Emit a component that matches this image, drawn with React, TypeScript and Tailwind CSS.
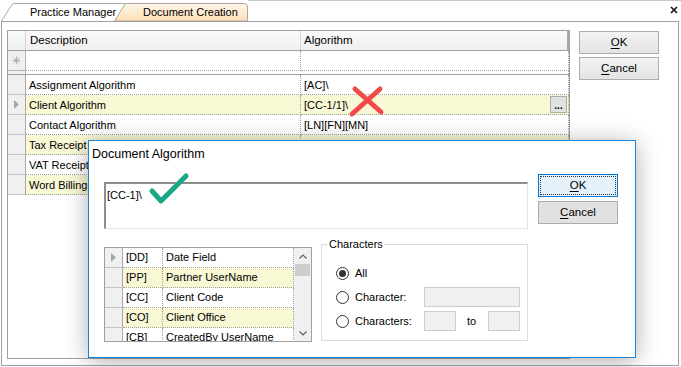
import type { ReactNode } from 'react'

type MainRow = {
  description: string
  algorithm: string
  alt?: boolean
  current?: boolean
  browse?: boolean
}

const mainRows: MainRow[] = [
  { description: 'Assignment Algorithm', algorithm: '[AC]\\' },
  { description: 'Client Algorithm', algorithm: '[CC-1/1]\\', alt: true, current: true, browse: true },
  { description: 'Contact Algorithm', algorithm: '[LN][FN][MN]' },
  { description: 'Tax Receipt Algorithm', algorithm: '', alt: true },
  { description: 'VAT Receipt Algorithm', algorithm: '' },
  { description: 'Word Billing Algorithm', algorithm: '', alt: true },
]

const fields = [
  { code: '[DD]', name: 'Date Field', current: true },
  { code: '[PP]', name: 'Partner UserName', alt: true },
  { code: '[CC]', name: 'Client Code' },
  { code: '[CO]', name: 'Client Office', alt: true },
  { code: '[CB]', name: 'CreatedBy UserName' },
]

function RowPointer() {
  return (
    <svg width="5" height="9" viewBox="0 0 5 9">
      <path d="M0 0 L5 4.5 L0 9 Z" fill="#a6a6a6" />
    </svg>
  )
}

function NewRowGlyph() {
  return (
    <svg width="9" height="9" viewBox="0 0 9 9" stroke="#b0b0b0" strokeWidth="1">
      <path d="M4.5 0.5 V8.5 M0.5 4.5 H8.5 M1.7 1.7 L7.3 7.3 M7.3 1.7 L1.7 7.3" />
    </svg>
  )
}

function Mnemonic({ first, rest }: { first: string; rest: string }) {
  return (
    <span>
      <span className="underline underline-offset-[2px]">{first}</span>
      {rest}
    </span>
  )
}

function WinButton({ children }: { children: ReactNode }) {
  return (
    <div className="flex h-[23px] w-[80px] items-center justify-center border border-[#adadad] bg-gradient-to-b from-[#f3f3f3] to-[#e4e4e4] text-[11.5px]">
      {children}
    </div>
  )
}

function TabStrip() {
  return (
    <div className="relative h-[21px] text-[11px]">
      <svg className="absolute inset-0" width="681" height="21" viewBox="0 0 681 21">
        <defs>
          <linearGradient id="tabSel" x1="0" y1="0" x2="0" y2="1">
            <stop offset="0" stopColor="#fff6ea" />
            <stop offset="1" stopColor="#fcdfb4" />
          </linearGradient>
        </defs>
        <line x1="248" y1="0.5" x2="681" y2="0.5" stroke="#c8c8c8" />
        <path d="M1.5 21 L12 4.5 Q13 3.5 15 3.5 L126 3.5" fill="white" stroke="#a8a8a8" />
        <path
          d="M114.5 21 L124.5 4.8 Q125.5 3.5 127.5 3.5 L244 3.5 Q247.5 3.5 247.5 7 L247.5 21 Z"
          fill="url(#tabSel)"
          stroke="#a8a8a8"
        />
        <path d="M671 7 L677 13 M677 7 L671 13" stroke="#111" strokeWidth="1.6" />
      </svg>
      <div className="relative flex h-full items-center pl-[30px] pt-[3px]">
        <span className="w-[113px]">Practice Manager</span>
        <span>Document Creation</span>
      </div>
    </div>
  )
}

function MainGrid() {
  return (
    <div className="flex h-[329px] w-[563px] flex-col border border-[#a0a0a0] bg-white text-[11px]">
      <div className="flex h-[20px] border-b border-[#a0a0a0] bg-gradient-to-b from-[#fafafa] to-[#f0f0f0] text-[11.5px]">
        <div className="w-[18px] border-r border-[#d0d0d0]" />
        <div className="flex w-[275px] items-center border-r border-[#d6d6d6] pl-[4px]">Description</div>
        <div className="flex flex-1 items-center border-r-2 border-[#a8a8a8] pl-[3px]">Algorithm</div>
      </div>
      <div className="flex h-[20px]">
        <div className="flex w-[18px] items-center justify-center border-b border-r border-[#b4b4b4] bg-[#f0f0f0]">
          <NewRowGlyph />
        </div>
        <div className="w-[275px] border-b border-r border-dotted border-[#a0a0a0]" />
        <div className="flex-1 border-b border-r border-dotted border-[#a0a0a0]" />
      </div>
      <div className="flex h-[4px] border-b border-[#a0a0a0]">
        <div className="w-[18px] border-r border-[#b4b4b4] bg-[#f0f0f0]" />
        <div className="flex-1 border-r border-dotted border-[#a0a0a0]" />
      </div>
      {mainRows.map((row) => (
        <div key={row.description} className="flex h-[20px]">
          <div className="flex w-[18px] items-center justify-center border-b border-r border-b-[#c4c4c4] border-r-[#a8a8a8] bg-[#f0f0f0]">
            {row.current && <RowPointer />}
          </div>
          <div
            className={`flex w-[275px] items-center whitespace-nowrap border-b border-r border-dotted border-[#a0a0a0] pl-[3px] pt-px ${row.alt ? 'bg-[#f8f8d5]' : ''}`}
          >
            {row.description}
          </div>
          <div
            className={`flex flex-1 items-center justify-between border-b border-r border-dotted border-[#a0a0a0] pl-[3px] pr-[1px] ${row.alt ? 'bg-[#f8f8d5]' : ''}`}
          >
            <span className="pt-px">{row.algorithm}</span>
            {row.browse && (
              <span className="flex h-[17px] w-[17px] items-end justify-center border border-[#adadad] bg-[#e1e1e1] pb-[2px] text-[10px] font-bold leading-[8px]">
                ...
              </span>
            )}
          </div>
        </div>
      ))}
    </div>
  )
}

function Radio({ checked }: { checked?: boolean }) {
  return (
    <span className="flex h-[13px] w-[13px] shrink-0 items-center justify-center rounded-full border border-[#333333] bg-white">
      {checked && <span className="h-[7px] w-[7px] rounded-full bg-[#333333]" />}
    </span>
  )
}

function FieldGrid() {
  return (
    <div className="mt-[10px] flex h-[95px] w-[208px] overflow-hidden border border-[#a0a0a0] bg-white text-[11px]">
      <div className="flex w-[189px] flex-col">
        {fields.map((f) => (
          <div key={f.code} className="flex h-[20px] shrink-0">
            <div className="flex w-[18px] items-center justify-center border-b border-r border-b-[#c4c4c4] border-r-[#a8a8a8] bg-[#f0f0f0]">
              {f.current && <RowPointer />}
            </div>
            <div
              className={`flex w-[40px] items-center border-b border-r border-dotted border-[#a0a0a0] pl-[3px] ${f.alt ? 'bg-[#f8f8d5]' : ''}`}
            >
              {f.code}
            </div>
            <div
              className={`flex w-[131px] items-center whitespace-nowrap border-b border-r border-dotted border-[#a0a0a0] pl-[3px] ${f.alt ? 'bg-[#f8f8d5]' : ''}`}
            >
              {f.name}
            </div>
          </div>
        ))}
      </div>
      <div className="flex w-[17px] flex-col bg-[#f0f0f0]">
        <div className="flex h-[16px] items-center justify-center">
          <svg width="8" height="5" viewBox="0 0 8 5">
            <path d="M0.5 4.5 L4 1 L7.5 4.5" fill="none" stroke="#606060" strokeWidth="1.2" />
          </svg>
        </div>
        <div className="mx-[1px] h-[12px] bg-[#cdcdcd]" />
        <div className="flex-1" />
        <div className="flex h-[16px] items-center justify-center">
          <svg width="8" height="5" viewBox="0 0 8 5">
            <path d="M0.5 0.5 L4 4 L7.5 0.5" fill="none" stroke="#606060" strokeWidth="1.2" />
          </svg>
        </div>
      </div>
    </div>
  )
}

function CharactersGroup() {
  return (
    <fieldset className="ml-[9px] h-[104px] w-[207px] min-w-0 border border-[#dcdcdc] text-[11px]">
      <legend className="ml-[6px] px-[1px] leading-[14px]">Characters</legend>
      <div className="flex flex-col pl-[14px] pt-[10px]">
        <div className="flex h-[24px] items-center gap-[6px]">
          <Radio checked />
          <span>All</span>
        </div>
        <div className="flex h-[24px] items-center gap-[6px]">
          <Radio />
          <span className="w-[63px]">Character:</span>
          <span className="h-[20px] w-[96px] border border-[#cccccc] bg-[#f0f0f0]" />
        </div>
        <div className="flex h-[24px] items-center gap-[6px]">
          <Radio />
          <span className="w-[63px]">Characters:</span>
          <span className="h-[20px] w-[32px] border border-[#cccccc] bg-[#f0f0f0]" />
          <span className="w-[20px] pl-[5px]">to</span>
          <span className="h-[20px] w-[32px] border border-[#cccccc] bg-[#f0f0f0]" />
        </div>
      </div>
    </fieldset>
  )
}

function AlgorithmDialog() {
  return (
    <div className="absolute left-[88px] top-[140px] z-10 flex h-[218px] w-[548px] flex-col border border-[#1883d7] bg-white shadow-[0_3px_22px_rgba(0,0,0,0.32)]">
      <div className="h-[30px] pl-[3px] pt-[5px] text-[12.5px] leading-[16px]">Document Algorithm</div>
      <div className="flex gap-[10px] pl-[15px]">
        <div className="flex w-[424px] flex-col pt-[11px]">
          <div className="h-[47px] border-b border-l-2 border-r border-t-2 border-b-[#e3e3e3] border-l-[#8e8e8e] border-r-[#e3e3e3] border-t-[#8e8e8e] pl-[1px] pt-[3px] text-[11px]">
            [CC-1]\
          </div>
          <div className="mt-[8px] flex items-start">
            <FieldGrid />
            <CharactersGroup />
          </div>
        </div>
        <div className="flex w-[80px] flex-col gap-[4px] pt-[3px] text-[11.5px]">
          <div className="flex h-[23px] w-[80px] border border-[#0078d7] bg-[#e5f1fb] p-[1px]">
            <div className="flex flex-1 items-center justify-center border border-dotted border-[#333333]">
              <Mnemonic first="O" rest="K" />
            </div>
          </div>
          <div className="flex h-[23px] w-[80px] items-center justify-center border border-[#adadad] bg-[#e1e1e1]">
            <Mnemonic first="C" rest="ancel" />
          </div>
        </div>
      </div>
    </div>
  )
}

export default function App() {
  return (
    <div className="relative h-[367px] w-[681px] overflow-hidden bg-white font-['Liberation_Sans',Arial,sans-serif] text-black">
      <TabStrip />
      <div className="ml-px mr-[2px] flex h-[345px] gap-[9px] border border-[#a0a0a0] pl-[5px] pt-[8px]">
        <MainGrid />
        <div className="flex flex-col gap-[3px] pt-[1px]">
          <WinButton>
            <Mnemonic first="O" rest="K" />
          </WinButton>
          <WinButton>
            <Mnemonic first="C" rest="ancel" />
          </WinButton>
        </div>
      </div>
      <AlgorithmDialog />
      <svg className="absolute left-[346px] top-[84px] z-20" width="40" height="34" viewBox="0 0 40 34">
        <path d="M9 5 L35 28 M34 5 L6 30" stroke="#f24a4a" strokeWidth="5" strokeLinecap="round" fill="none" />
      </svg>
      <svg className="absolute left-[146px] top-[170px] z-20" width="46" height="36" viewBox="0 0 46 36">
        <path d="M6 21 L15 31 L40 6" stroke="#19a788" strokeWidth="5" strokeLinecap="round" strokeLinejoin="round" fill="none" />
      </svg>
    </div>
  )
}
